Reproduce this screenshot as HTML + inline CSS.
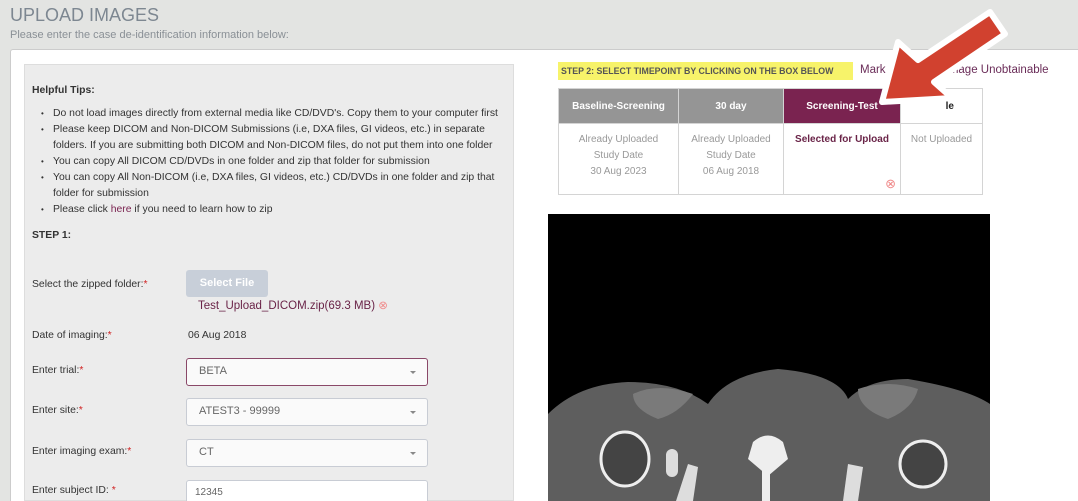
<!DOCTYPE html>
<html style="overflow:hidden"><head><style>
*{margin:0;padding:0;box-sizing:border-box}
html,body{width:1078px;height:501px;overflow:hidden}
body{background:#e3e4e2;font-family:"Liberation Sans",sans-serif;position:relative}
.a{position:absolute}
h1{position:absolute;left:10px;top:5px;font-size:18px;font-weight:normal;color:#7d8791}
.sub{left:10px;top:29px;font-size:11px;color:#8a9096}
.panel{left:10px;top:49px;width:1068px;height:452px;background:#fff;border-top:1px solid #ccc;border-left:1px solid #ccc;border-radius:3px 0 0 0}
.tips{left:24px;top:64px;width:490px;height:437px;background:#ececec;border:1px solid #ddd}
.t{font-size:10.4px;color:#333}
.b{font-weight:bold}
li{position:absolute;left:53px;font-size:10.4px;color:#333;list-style:none;white-space:nowrap}
li:before{content:"•";position:absolute;left:-12px;font-size:8px;top:1px}
.req{color:#d02020}
.sel{position:absolute;left:186px;width:242px;height:28px;background:#fafafa;border:1px solid #c8ccd4;border-radius:3px;font-size:11px;color:#666;padding:6px 0 0 12px}
.sel.dd:after{content:"";position:absolute;right:11px;top:12px;border:3px solid transparent;border-top:3px solid #888}
table{position:absolute;left:558px;top:88px;border-collapse:collapse;font-size:10px;table-layout:fixed}
td{border:1px solid #d4d4d4;text-align:center;vertical-align:top}
.h td{height:35px;vertical-align:middle;font-weight:bold;color:#fff;background:#959595}
.r td{height:71px;color:#999;line-height:16px;padding-top:8px}
</style></head><body>
<h1>UPLOAD IMAGES</h1>
<div class="a sub">Please enter the case de-identification information below:</div>
<div class="a panel"></div>
<div class="a tips"></div>
<div class="a t b" style="left:32px;top:85px">Helpful Tips:</div>
<li style="top:108px">Do not load images directly from external media like CD/DVD's. Copy them to your computer first</li>
<li style="top:124px">Please keep DICOM and Non-DICOM Submissions (i.e, DXA files, GI videos, etc.) in separate</li>
<div class="a t" style="left:53px;top:140px">folders. If you are submitting both DICOM and Non-DICOM files, do not put them into one folder</div>
<li style="top:156px">You can copy All DICOM CD/DVDs in one folder and zip that folder for submission</li>
<li style="top:172px">You can copy All Non-DICOM (i.e, DXA files, GI videos, etc.) CD/DVDs in one folder and zip that</li>
<div class="a t" style="left:53px;top:188px">folder for submission</div>
<li style="top:204px">Please click <span style="color:#7a2350">here</span> if you need to learn how to zip</li>
<div class="a t b" style="left:32px;top:230px">STEP 1:</div>
<div class="a t" style="left:32px;top:279px">Select the zipped folder:<span class="req">*</span></div>
<div class="a" style="left:186px;top:270px;width:82px;height:27px;background:#c8cfd9;border-radius:3px;color:#fff;font-size:11px;font-weight:bold;text-align:center;line-height:27px">Select File</div>
<div class="a" style="left:198px;top:298px;font-size:11.5px;color:#6a2448">Test_Upload_DICOM.zip(69.3 MB) <span style="color:#f08a8a">⊗</span></div>
<div class="a t" style="left:32px;top:330px">Date of imaging:<span class="req">*</span></div>
<div class="a t" style="left:188px;top:330px">06 Aug 2018</div>
<div class="a t" style="left:32px;top:365px">Enter trial:<span class="req">*</span></div>
<div class="sel dd" style="top:358px;border-color:#8a4868">BETA</div>
<div class="a t" style="left:32px;top:405px">Enter site:<span class="req">*</span></div>
<div class="sel dd" style="top:398px">ATEST3 - 99999</div>
<div class="a t" style="left:32px;top:446px">Enter imaging exam:<span class="req">*</span></div>
<div class="sel dd" style="top:439px">CT</div>
<div class="a t" style="left:32px;top:485px">Enter subject ID: <span class="req">*</span></div>
<div class="sel" style="top:480px;background:#fff;font-size:10px;padding-left:8px">12345</div>

<div class="a" style="left:558px;top:62px;width:295px;height:18px;background:#f7f36a;font-size:8.8px;font-weight:bold;color:#555;line-height:18px;padding-left:3px;white-space:nowrap">STEP 2: SELECT TIMEPOINT BY CLICKING ON THE BOX BELOW</div>
<div class="a" style="left:860px;top:64px;font-size:11.5px;color:#6a2c58;white-space:nowrap">Mark a&nbsp;&nbsp;&nbsp;&nbsp;&nbsp;&nbsp;&nbsp;&nbsp;&nbsp;&nbsp;&nbsp;&nbsp;&nbsp;s Image Unobtainable</div>
<table style="width:424px">
<col style="width:120px"><col style="width:105px"><col style="width:117px"><col style="width:82px">
<tr class="h"><td>Baseline-Screening</td><td>30 day</td><td style="background:#7a2350">Screening-Test</td><td style="background:#fff;color:#222">&nbsp;&nbsp;&nbsp;&nbsp;&nbsp;&nbsp;le</td></tr>
<tr class="r"><td>Already Uploaded<br>Study Date<br>30 Aug 2023</td><td>Already Uploaded<br>Study Date<br>06 Aug 2018</td><td style="color:#6a2448;font-weight:bold;position:relative">Selected for Upload<span style="position:absolute;right:4px;bottom:2px;color:#f08a8a;font-weight:normal;font-size:13px">⊗</span></td><td>Not Uploaded</td></tr>
</table>

<svg class="a" style="left:548px;top:214px" width="442" height="287" viewBox="0 0 442 287">
<rect width="442" height="287" fill="#000"/>
<path d="M0 200 Q30 170 80 168 Q130 168 160 190 Q180 160 230 155 Q290 160 300 185 Q320 165 360 165 Q420 175 442 190 L442 287 L0 287Z" fill="#5e5e5e"/>
<path d="M85 180 Q110 168 145 180 Q130 200 110 205 Q85 195 85 180Z" fill="#7a7a7a"/>
<path d="M310 175 Q340 165 370 175 Q365 195 340 205 Q310 195 310 175Z" fill="#7a7a7a"/>
<ellipse cx="77" cy="245" rx="24" ry="27" fill="#444" stroke="#eee" stroke-width="3"/>
<ellipse cx="375" cy="250" rx="23" ry="23" fill="#444" stroke="#eee" stroke-width="3"/>
<path d="M205 228 Q220 215 235 228 L240 245 L220 262 L200 245Z" fill="#eee"/>
<rect x="214" y="255" width="8" height="32" fill="#eee"/>
<rect x="118" y="235" width="12" height="28" rx="6" fill="#ddd"/>
<path d="M128 287 L140 250 L150 253 L145 287Z" fill="#ddd"/>
<path d="M295 287 L300 250 L315 253 L310 287Z" fill="#ddd"/>
</svg>

<svg class="a" style="left:870px;top:0px" width="150" height="120" viewBox="0 0 150 120">
<polygon points="12,102 28,42 48,60 120,12 135,34 64,82 82,98" fill="#d1412f" stroke="#fff" stroke-width="6" stroke-linejoin="round"/>
</svg>
</body></html>
